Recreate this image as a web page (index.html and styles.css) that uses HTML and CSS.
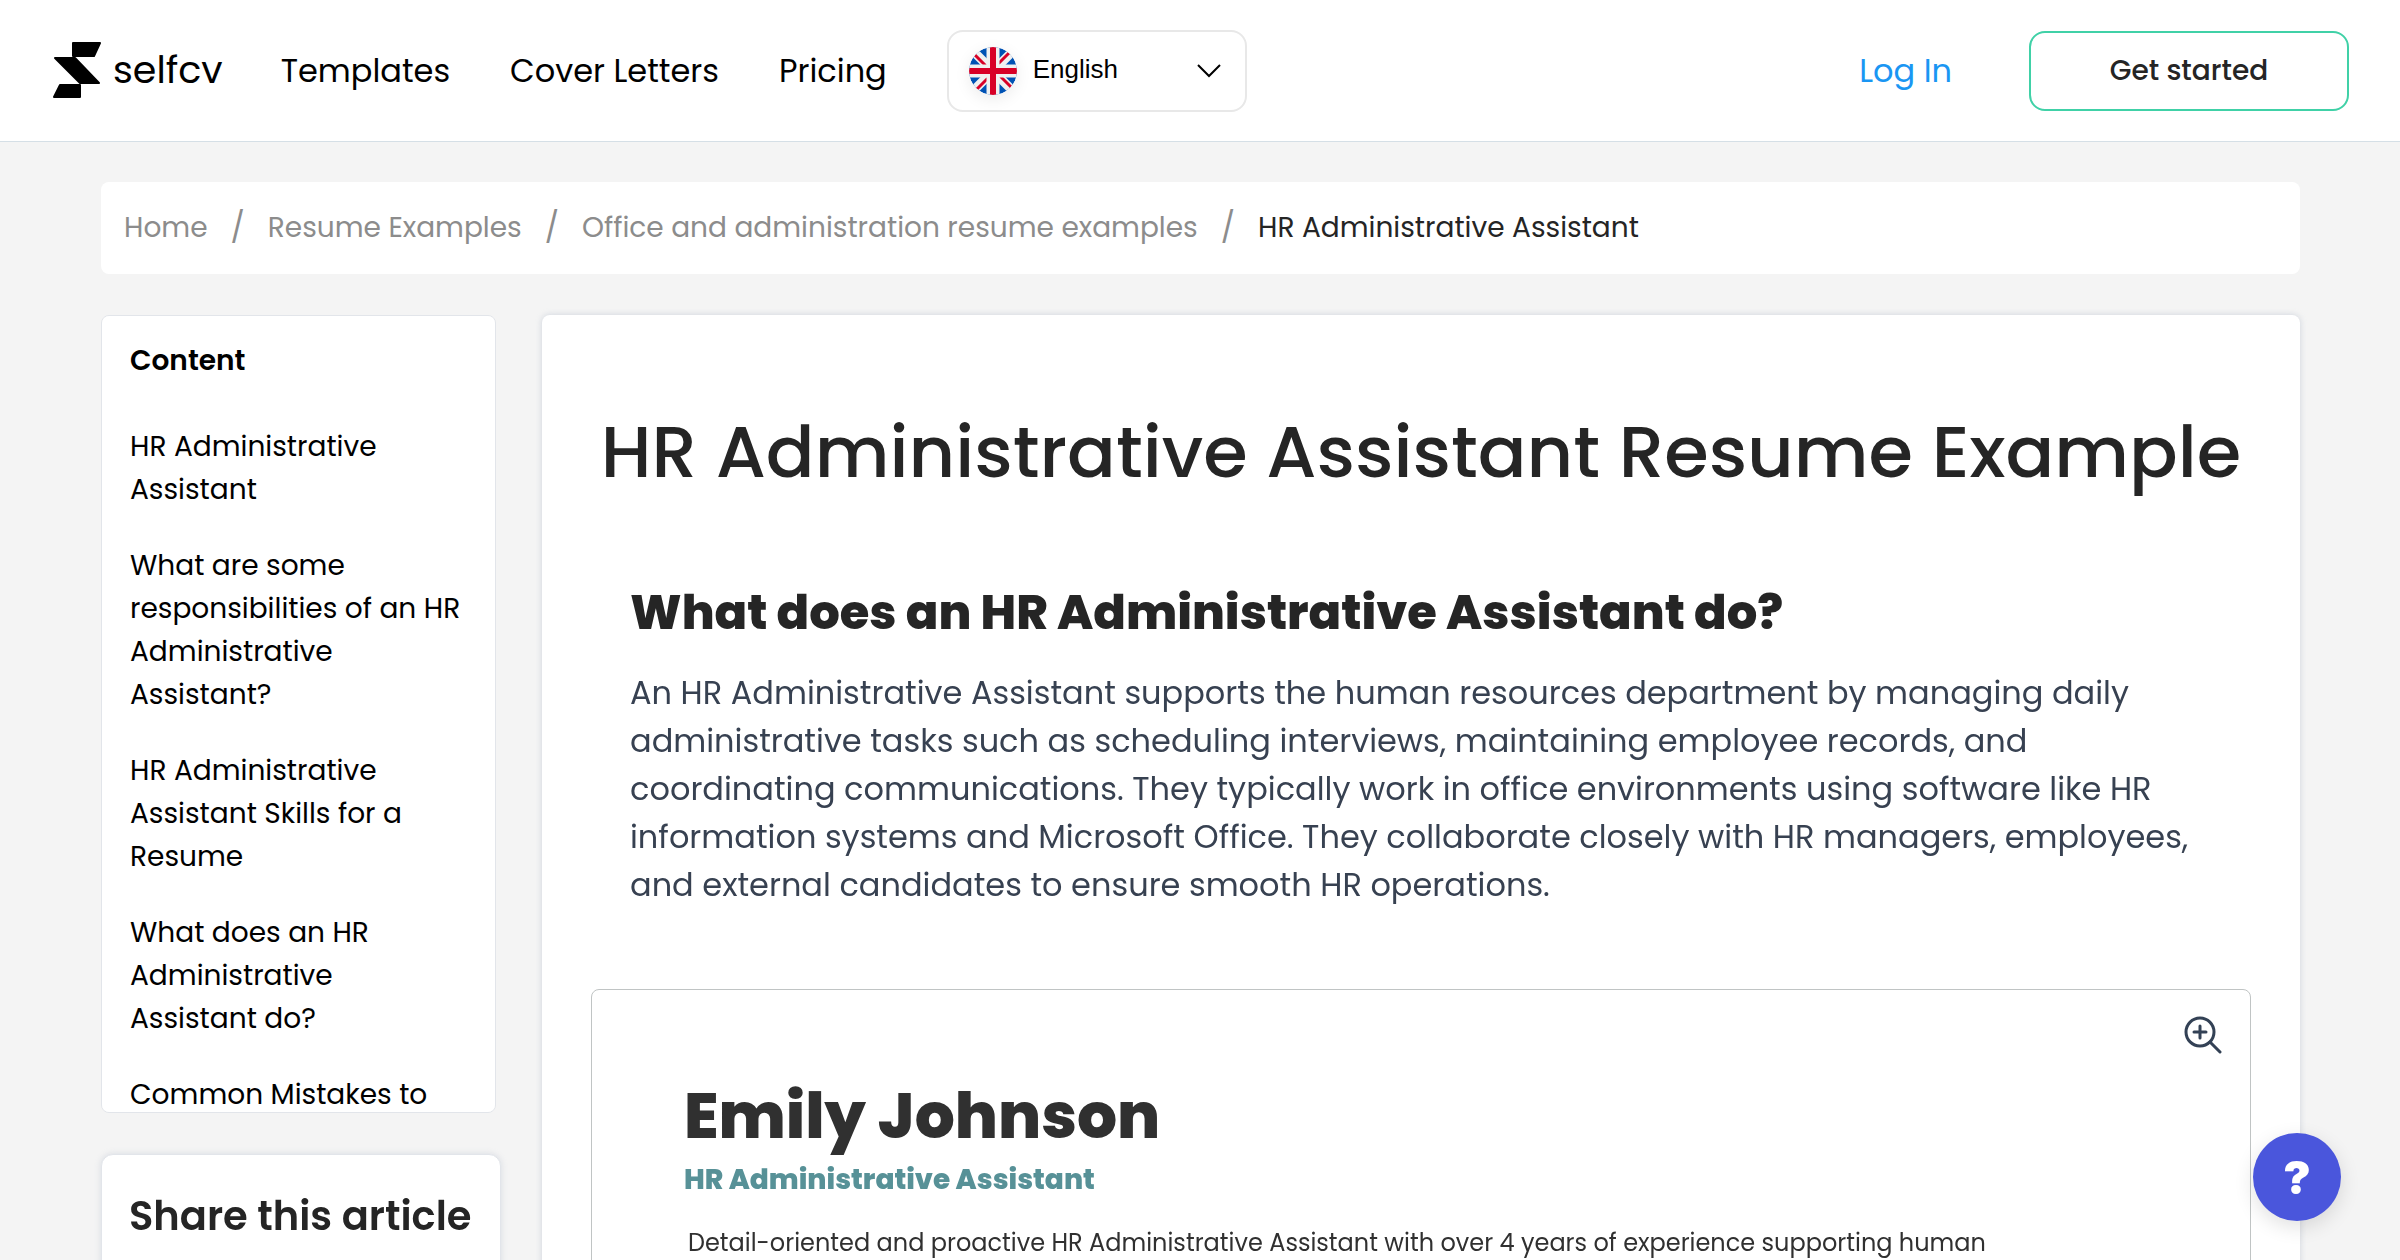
FILE: index.html
```html
<!DOCTYPE html>
<html lang="en">
<head>
  <meta charset="UTF-8">
  <meta name="viewport" content="width=device-width, initial-scale=1">
  <title>HR Administrative Assistant Resume Example</title>
  <link rel="stylesheet" href="styles.css">
</head>
<body>
  <header class="header">
    <a class="logo" href="#">
      <svg class="logo-mark" viewBox="0 0 48 56" aria-hidden="true">
        <path d="M20 1H47L41 14H20ZM2 16H22L46 41H27ZM7 43H27V55H1Z"/>
      </svg>
      <span>selfcv</span>
    </a>
    <nav class="menu">
      <a href="#">Templates</a>
      <a href="#">Cover Letters</a>
      <a href="#">Pricing</a>
    </nav>
    <div class="language">
      <svg class="flag" viewBox="0 0 48 48" aria-hidden="true">
        <clipPath id="round"><circle cx="24" cy="24" r="24"/></clipPath>
        <g clip-path="url(#round)">
          <path fill="#0052b4" d="M0 0H48V48H0Z"/>
          <path stroke="#f0f0f0" stroke-width="9" d="M4 4L44 44M44 4L4 44"/>
          <path stroke="#d80027" stroke-width="3" d="M4 6L22 24M42 4L24 22M26 24L44 42M24 26L6 44"/>
          <path stroke="#f0f0f0" stroke-width="13" d="M24 0V48M0 24H48"/>
          <path stroke="#d80027" stroke-width="6" d="M24 0V48M0 24H48"/>
        </g>
      </svg>
      <select class="language-select" aria-label="Language">
        <option>English</option>
      </select>
      <svg class="chevron" viewBox="0 0 24 14" aria-hidden="true">
        <path d="M1 1L12 12L23 1"/>
      </svg>
    </div>
    <a class="login" href="#">Log In</a>
    <button class="start-button">Get started</button>
  </header>

  <div class="page">
    <nav class="breadcrumb">
      <a href="#">Home</a>
      <span class="divider">/</span>
      <a href="#">Resume Examples</a>
      <span class="divider">/</span>
      <a href="#">Office and administration resume examples</a>
      <span class="divider">/</span>
      <span class="current">HR Administrative Assistant</span>
    </nav>

    <div class="columns">
      <aside class="sidebar">
        <nav class="contents">
          <h3>Content</h3>
          <a href="#">HR Administrative Assistant</a>
          <a href="#">What are some responsibilities of an HR Administrative Assistant?</a>
          <a href="#">HR Administrative Assistant Skills for a Resume</a>
          <a href="#">What does an HR Administrative Assistant do?</a>
          <a href="#">Common Mistakes to</a>
        </nav>
        <section class="share">
          <h4>Share this article</h4>
        </section>
      </aside>

      <main class="article">
        <h1>HR Administrative Assistant Resume Example</h1>
        <section class="intro">
          <h2>What does an HR Administrative Assistant do?</h2>
          <p>An HR Administrative Assistant supports the human resources department by managing daily administrative tasks such as scheduling interviews, maintaining employee records, and coordinating communications. They typically work in office environments using software like HR information systems and Microsoft Office. They collaborate closely with HR managers, employees, and external candidates to ensure smooth HR operations.</p>
        </section>
        <section class="resume">
          <button class="zoom-button" aria-label="Zoom in">
            <svg viewBox="0 0 38 38" aria-hidden="true">
              <circle cx="16" cy="16" r="14"/>
              <path d="M26 26L36 36M16 10V22M10 16H22"/>
            </svg>
          </button>
          <div class="resume-name">Emily Johnson</div>
          <div class="resume-role">HR Administrative Assistant</div>
          <p>Detail-oriented and proactive HR Administrative Assistant with over 4 years of experience supporting human</p>
        </section>
      </main>
    </div>
  </div>

  <button class="help-button">?</button>
</body>
</html>
```

FILE: styles.css
```css
:root {
  --text: #252525;
  --border: #e2e5ea;
  --page-bg: #f4f4f4;
  --blue: #1a96f3;
  --green: #40d1a7;
}

* {
  box-sizing: border-box;
}

body {
  margin: 0;
  height: 100vh;
  overflow: hidden;
  font-family: Poppins, Inter, sans-serif;
  font-size: 32px;
  color: var(--text);
  background: var(--page-bg);
}

a {
  color: inherit;
  text-decoration: none;
}

h1, h2, h3, h4, p {
  margin: 0;
}

button {
  font-family: inherit;
  cursor: pointer;
}

.header {
  display: flex;
  align-items: center;
  height: 142px;
  padding: 0 51px 0 53px;
  color: #000;
  background: #fff;
  border-bottom: 1px solid #d5dfe6;
}

.logo {
  display: flex;
  align-items: center;
  gap: 12px;
  padding-bottom: 2px;
  font-size: 38px;
  line-height: 56px;
}

.logo-mark {
  width: 48px;
  height: 56px;
  stroke: #000;
  stroke-width: 2;
  stroke-linejoin: round;
}

.menu {
  display: flex;
  gap: 60px;
  margin: 0 60px 0 58px;
  font-size: 32px;
}

.language {
  display: flex;
  align-items: center;
  gap: 16px;
  width: 300px;
  height: 82px;
  padding: 0 24px 0 20px;
  border: 2px solid #e8e8e8;
  border-radius: 16px;
}

.flag {
  flex: none;
  width: 48px;
  height: 48px;
  border-radius: 50%;
  box-shadow: 0 4px 16px rgba(0, 0, 0, 0.08);
}

.language-select {
  flex: 1;
  min-width: 0;
  padding: 0 0 4px;
  border: none;
  background: none;
  appearance: none;
  font-family: "Liberation Sans", Arial, sans-serif;
  font-size: 26px;
  color: #000;
}

.chevron {
  flex: none;
  width: 24px;
  height: 14px;
  fill: none;
  stroke: #000;
  stroke-width: 2;
}

.login {
  margin-left: auto;
  color: var(--blue);
  font-size: 32px;
}

.start-button {
  width: 320px;
  height: 80px;
  margin-left: 77px;
  border: 2px solid var(--green);
  border-radius: 16px;
  background: #fff;
  color: var(--text);
  font-size: 28px;
  font-weight: 500;
}

.page {
  padding: 40px 100px 0 101px;
}

.breadcrumb {
  display: flex;
  align-items: center;
  gap: 23px;
  height: 92px;
  padding: 0 23px;
  border-radius: 8px;
  background: #fff;
  color: #8c8c8c;
  font-size: 28px;
}

.divider {
  font-size: 30px;
}

.current {
  color: var(--text);
}

.columns {
  display: grid;
  grid-template-columns: 400px 1fr;
  gap: 41px;
  margin-top: 41px;
}

.contents {
  display: flex;
  flex-direction: column;
  gap: 33px;
  height: 798px;
  margin-right: 5px;
  padding: 23px 32px 0 28px;
  overflow-y: auto;
  scrollbar-width: none;
  border: 1px solid var(--border);
  border-radius: 8px;
  background: #fff;
  color: #000;
  font-size: 28px;
  line-height: 43px;
}

.contents h3 {
  margin-bottom: 10px;
  font-size: 28px;
  font-weight: 600;
}

.share {
  height: 300px;
  margin-top: 41px;
  padding: 31px 27px;
  border: 1px solid var(--border);
  border-radius: 12px;
  background: #fff;
  box-shadow: 0 0 6px rgba(148, 163, 184, 0.3);
}

.share h4 {
  font-size: 40px;
  font-weight: 600;
  line-height: 60px;
  white-space: nowrap;
}

.article {
  padding: 87px 49px 40px;
  border-radius: 8px;
  background: #fff;
  box-shadow: 0 0 6px rgba(148, 163, 184, 0.4);
}

.article h1 {
  font-size: 72px;
  font-weight: 500;
  line-height: 100px;
  text-align: center;
  white-space: nowrap;
}

.intro {
  padding: 75px 39px 0;
}

.intro h2 {
  font-size: 48px;
  font-weight: 800;
  line-height: 72px;
}

.intro p {
  margin-top: 20px;
  color: #374151;
  font-size: 32px;
  line-height: 48px;
}

.resume {
  position: relative;
  height: 500px;
  margin-top: 80px;
  padding: 80px 92px;
  border: 1px solid #c0c4c4;
  border-radius: 8px;
  color: #303030;
}

.resume-name {
  font-size: 63px;
  font-weight: 800;
  line-height: 92px;
}

.resume-role {
  color: #579197;
  font-size: 28px;
  font-weight: 800;
  line-height: 36px;
}

.resume p {
  margin-top: 25px;
  padding: 0 4px;
  font-size: 24px;
  line-height: 40px;
}

.zoom-button {
  position: absolute;
  top: 26px;
  right: 28px;
  width: 38px;
  height: 38px;
  padding: 0;
  border: none;
  background: none;
}

.zoom-button svg {
  display: block;
  fill: none;
  stroke: #334155;
  stroke-width: 3;
  stroke-linecap: round;
}

.help-button {
  position: fixed;
  right: 59px;
  bottom: 39px;
  width: 88px;
  height: 88px;
  padding: 0;
  border: none;
  border-radius: 50%;
  background: #4a56dc;
  color: #fff;
  font-family: Inter, sans-serif;
  font-size: 46px;
  font-weight: 900;
  box-shadow: 0 6px 20px rgba(0, 0, 0, 0.12);
}
```
